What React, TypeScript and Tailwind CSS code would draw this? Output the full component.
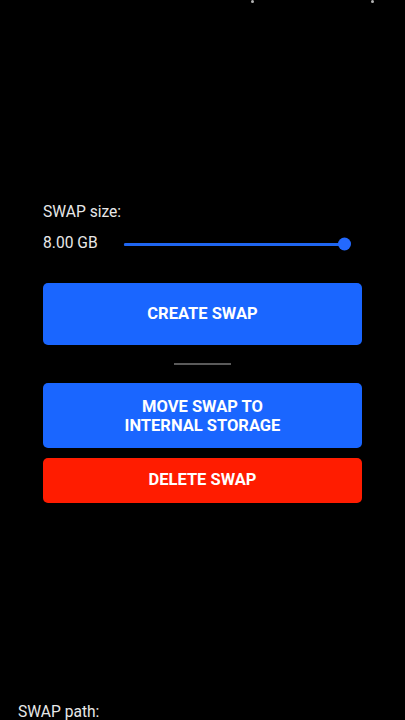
import React, { useState } from 'react';

const BLUE = 'bg-[#1a66ff]';

export default function App() {
  const [size] = useState(8);
  const pct = 100;

  return (
    <div className="relative w-[405px] h-[720px] overflow-hidden bg-black text-white font-['Roboto',sans-serif]">
      {/* clipped status text specks at the very top */}
      <div className="absolute top-0 left-[251px] w-[3px] h-[3px] rounded-full bg-white/70" />
      <div className="absolute top-0 left-[371px] w-[3px] h-[3px] rounded-full bg-white/70" />

      <div className="flex flex-col px-[43px] pt-[202px]">
        <div className="text-[15.6px] leading-[20px] text-[#e8e8e8]">SWAP size:</div>

        <div className="flex items-center mt-[11px] h-[22px]">
          <span className="w-[81px] text-[15.6px] text-[#e8e8e8]">{size.toFixed(2)} GB</span>
          <div className="relative flex-1 h-[3px] mr-[18px] rounded-full bg-[#1a5ee0]">
            <div className="h-full rounded-full bg-[#1f66f0]" style={{ width: `${pct}%` }} />
            <div className="absolute right-[-6.5px] top-1/2 -translate-y-1/2 w-[13px] h-[13px] rounded-full bg-[#2369ff]" />
          </div>
        </div>

        <button className={`mt-[28px] h-[62px] w-[319px] rounded-[5px] ${BLUE} text-[16.5px] font-bold text-white`}>
          CREATE SWAP
        </button>

        <div className="flex justify-center mt-[18px]">
          <div className="w-[57px] h-[2px] bg-[#5a5a5a]" />
        </div>

        <button className={`mt-[18px] h-[65px] w-[319px] rounded-[5px] ${BLUE} text-[16.5px] leading-[19px] font-bold text-white`}>
          MOVE SWAP TO
          <br />
          INTERNAL STORAGE
        </button>

        <button className="mt-[10px] h-[45px] w-[319px] rounded-[5px] bg-[#ff1c00] text-[16.5px] font-bold text-white">
          DELETE SWAP
        </button>
      </div>

      <div className="absolute left-[18px] top-[702px] text-[15.6px] leading-[20px] text-[#e8e8e8]">SWAP path:</div>
    </div>
  );
}
